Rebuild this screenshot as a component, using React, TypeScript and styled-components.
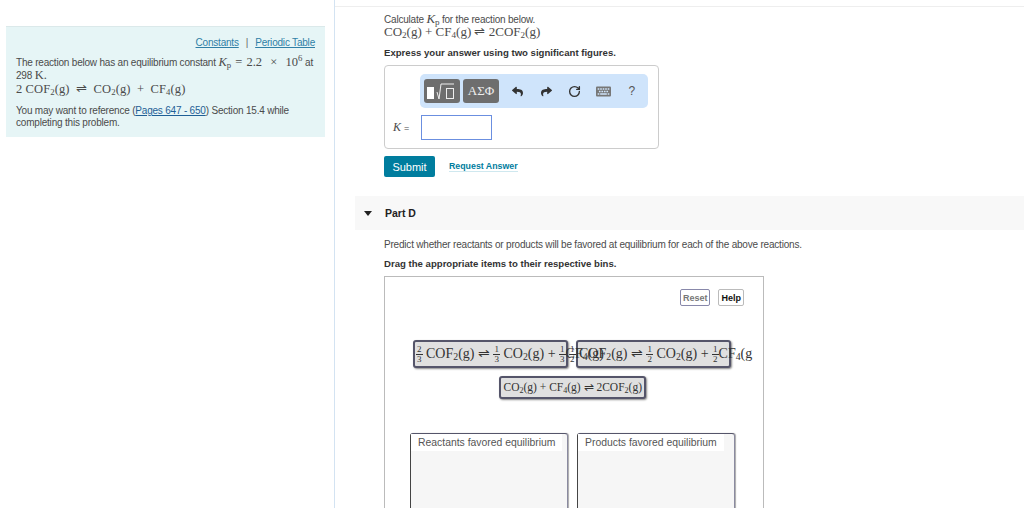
import styled, { createGlobalStyle } from "styled-components";
import { FaReply, FaShare, FaKeyboard } from "react-icons/fa";
import { RotateCw } from "lucide-react";

const GlobalStyle = createGlobalStyle`
	html, body {
		margin: 0;
		height: 508px;
		overflow: hidden;
		background: #fff;
		font-family: "Liberation Sans", Arial, sans-serif;
		color: #4b4b4b;
	}
`;

const Fraction = ({ top, bottom }: { top: string; bottom: string }) => (
	<Frac>
		<span>{top}</span>
		<span>{bottom}</span>
	</Frac>
);

const App = () => {
	return (
		<Page>
			<GlobalStyle />
			<LeftColumn>
				<InfoPanel>
					<InfoLinks>
						<InfoLink>Constants</InfoLink>
						<Pipe>|</Pipe>
						<InfoLink>Periodic Table</InfoLink>
					</InfoLinks>
					<InfoText>
						The reaction below has an equilibrium constant{" "}
						<InfoMath>
							<i>K</i>
							<sub>p</sub> = 2.2 &nbsp;×&nbsp; 10<sup>6</sup>
						</InfoMath>{" "}
						at
						<br />
						298 <InfoMath>K.</InfoMath>
					</InfoText>
					<InfoEquation>
						2 COF<sub>2</sub>(g) &nbsp;⇌&nbsp; CO<sub>2</sub>(g) &nbsp;+&nbsp; CF<sub>4</sub>(g)
					</InfoEquation>
					<InfoNote>
						You may want to reference (<NoteLink>Pages 647 - 650</NoteLink>) Section 15.4 while
						completing this problem.
					</InfoNote>
				</InfoPanel>
			</LeftColumn>
			<RightColumn>
				<Section>
					<Prompt>
						Calculate{" "}
						<PromptMath>
							<i>K</i>
							<sub>p</sub>
						</PromptMath>{" "}
						for the reaction below.
					</Prompt>
					<Equation>
						CO<sub>2</sub>(g) + CF<sub>4</sub>(g) ⇌ 2COF<sub>2</sub>(g)
					</Equation>
					<Instruction>Express your answer using two significant figures.</Instruction>
					<AnswerBox>
						<Toolbar>
							<ToolGroup>
								<ToolButton>
									<svg width="32" height="18" viewBox="0 0 32 18">
										<rect x="1" y="5" width="7" height="12" fill="#fff" />
										<path d="M11 10l2 7 2-15h13" fill="none" stroke="#eee" strokeWidth="1" />
										<rect x="20.5" y="6.5" width="7" height="10" fill="none" stroke="#eee" />
									</svg>
								</ToolButton>
								<ToolButton>ΑΣΦ</ToolButton>
							</ToolGroup>
							<ToolIcons>
								<IconSlot>
									<FaReply size={11} color="#333" />
								</IconSlot>
								<IconSlot>
									<FaShare size={11} color="#333" />
								</IconSlot>
								<IconSlot>
									<RotateCw size={13} color="#333" strokeWidth={2.5} />
								</IconSlot>
								<IconSlot>
									<FaKeyboard size={15} color="#777" />
								</IconSlot>
								<IconSlot>
									<HelpMark>?</HelpMark>
								</IconSlot>
							</ToolIcons>
						</Toolbar>
						<AnswerRow>
							<AnswerLabel>
								<i>K</i> <small>=</small>
							</AnswerLabel>
							<AnswerInput />
						</AnswerRow>
					</AnswerBox>
					<Actions>
						<SubmitButton>Submit</SubmitButton>
						<RequestLink>Request Answer</RequestLink>
					</Actions>
				</Section>
				<PartHeader>
					<Caret />
					<PartTitle>Part D</PartTitle>
				</PartHeader>
				<Section>
					<PredictText>
						Predict whether reactants or products will be favored at equilibrium for each of the
						above reactions.
					</PredictText>
					<DragInstruction>Drag the appropriate items to their respective bins.</DragInstruction>
					<DragArea>
						<DragTools>
							<SmallButton $muted>Reset</SmallButton>
							<SmallButton>Help</SmallButton>
						</DragTools>
						<TileRow>
							<Tile $indent={0}>
								<Fraction top="2" bottom="3" /> COF<sub>2</sub>(g) ⇌ <Fraction top="1" bottom="3" /> CO
								<sub>2</sub>(g) + <Fraction top="1" bottom="3" />
								CF<sub>4</sub>(g)
							</Tile>
							<Tile $indent={-10}>
								<Fraction top="1" bottom="2" /> COF<sub>2</sub>(g) ⇌ <Fraction top="1" bottom="2" /> CO
								<sub>2</sub>(g) + <Fraction top="1" bottom="2" />
								CF<sub>4</sub>(g
							</Tile>
						</TileRow>
						<TileRow>
							<SmallTile $indent={0}>
								CO<sub>2</sub>(g) + CF<sub>4</sub>(g) ⇌ 2COF<sub>2</sub>(g)
							</SmallTile>
						</TileRow>
						<Bins>
							<Bin>
								<BinLabel>Reactants favored equilibrium</BinLabel>
							</Bin>
							<Bin>
								<BinLabel>Products favored equilibrium</BinLabel>
							</Bin>
						</Bins>
					</DragArea>
				</Section>
			</RightColumn>
		</Page>
	);
};
export default App;

// =============================================================================
// Styled Components
// =============================================================================
const Page = styled.div`
	display: flex;
	height: 508px;
	overflow: hidden;
	sub,
	sup {
		font-size: 70%;
		line-height: 0;
	}
	sub {
		vertical-align: -0.2em;
	}
`;

const LeftColumn = styled.div`
	width: 335px;
	flex: none;
	box-sizing: border-box;
	border-right: 1px solid #d3e3f2;
	padding: 26px 9px 0 6px;
`;

const InfoPanel = styled.div`
	height: 111px;
	box-sizing: border-box;
	background: #e6f5f6;
	border-top: 1px solid #dbe9ea;
	padding: 10px 10px 0;
	font-size: 10px;
	letter-spacing: -0.2px;
	line-height: 12px;
`;

const InfoLinks = styled.div`
	display: flex;
	justify-content: flex-end;
	gap: 7px;
	margin-bottom: 7px;
`;

const InfoLink = styled.span`
	color: #2f7fa6;
	text-decoration: underline;
`;

const Pipe = styled.span`
	color: #666;
`;

const InfoText = styled.div`
	white-space: nowrap;
	line-height: 13px;
`;

const InfoMath = styled.span`
	font-family: "Liberation Serif", serif;
	font-size: 12.5px;
	line-height: 0;
	letter-spacing: 0;
	word-spacing: 1px;
`;

const InfoEquation = styled.div`
	font-family: "Liberation Serif", serif;
	font-size: 12.5px;
	line-height: 13px;
	letter-spacing: 0.1px;
	margin: 1px 0 9px;
`;

const InfoNote = styled.div``;

const NoteLink = styled.span`
	color: #1f5f96;
	text-decoration: underline;
`;

const RightColumn = styled.div`
	flex: 1;
	border-top: 1px solid #eee;
	margin-top: 6px;
`;

const Section = styled.div`
	padding-left: 49px;
`;

const Prompt = styled.div`
	font-size: 10px;
	letter-spacing: -0.2px;
	line-height: 12px;
	padding-top: 7px;
`;

const PromptMath = styled.span`
	font-family: "Liberation Serif", serif;
	font-size: 13px;
	line-height: 0;
`;

const Equation = styled.div`
	font-family: "Liberation Serif", serif;
	font-size: 13px;
	line-height: 14px;
	margin-top: -1px;
`;

const Instruction = styled.div`
	font-size: 9.6px;
	font-weight: bold;
	color: #333;
	line-height: 12px;
	margin-top: 8px;
`;

const AnswerBox = styled.div`
	width: 275px;
	height: 84px;
	box-sizing: border-box;
	border: 1px solid #ccc;
	border-radius: 4px;
	margin-top: 6px;
	padding: 8px 10px 0 8px;
`;

const Toolbar = styled.div`
	display: flex;
	align-items: center;
	justify-content: space-between;
	width: 228px;
	height: 34px;
	margin-left: 27px;
	box-sizing: border-box;
	padding: 0 2px 0 4px;
	background: #cfe4fb;
	border-radius: 5px;
`;

const ToolGroup = styled.div`
	display: flex;
	gap: 3px;
`;

const ToolButton = styled.div`
	width: 36px;
	height: 24px;
	display: flex;
	align-items: center;
	justify-content: center;
	background: #6e6e6e;
	border-radius: 3px;
	color: #eee;
	font-family: "Liberation Serif", serif;
	font-size: 13px;
`;

const ToolIcons = styled.div`
	display: flex;
	align-items: center;
`;

const IconSlot = styled.div`
	width: 28.5px;
	display: flex;
	align-items: center;
	justify-content: center;
`;

const HelpMark = styled.span`
	font-size: 12px;
	color: #555;
`;

const AnswerRow = styled.div`
	display: flex;
	align-items: center;
	margin-top: 7px;
`;

const AnswerLabel = styled.div`
	width: 28px;
	font-family: "Liberation Serif", serif;
	font-size: 12px;
	small {
		font-family: "Liberation Sans", sans-serif;
		font-size: 9px;
	}
`;

const AnswerInput = styled.div`
	width: 71px;
	height: 25px;
	box-sizing: border-box;
	border: 1px solid #6b8fe0;
`;

const Actions = styled.div`
	display: flex;
	align-items: center;
	gap: 14px;
	margin-top: 7px;
`;

const SubmitButton = styled.div`
	width: 51px;
	height: 21px;
	display: flex;
	align-items: center;
	justify-content: center;
	background: #007d9e;
	border-radius: 2px;
	color: #fff;
	font-size: 11px;
`;

const RequestLink = styled.span`
	color: #007d9e;
	font-size: 8.8px;
	font-weight: bold;
	border-bottom: 1px solid #cfe8ef;
`;

const PartHeader = styled.div`
	display: flex;
	align-items: center;
	height: 34px;
	margin: 19px 0 0 20px;
	background: #f8f8f8;
	padding-left: 9px;
`;

const Caret = styled.div`
	width: 0;
	height: 0;
	border-left: 4px solid transparent;
	border-right: 4px solid transparent;
	border-top: 5px solid #222;
`;

const PartTitle = styled.div`
	margin-left: 13px;
	font-size: 10.5px;
	font-weight: bold;
	color: #222;
`;

const PredictText = styled.div`
	font-size: 10px;
	letter-spacing: -0.2px;
	line-height: 12px;
	margin-top: 9px;
`;

const DragInstruction = styled.div`
	font-size: 9.6px;
	font-weight: bold;
	color: #333;
	line-height: 12px;
	margin-top: 7px;
`;

const DragArea = styled.div`
	width: 380px;
	height: 300px;
	box-sizing: border-box;
	border: 1px solid #bbb;
	margin-top: 6px;
	padding-top: 12px;
`;

const DragTools = styled.div`
	display: flex;
	justify-content: flex-end;
	gap: 8px;
	padding-right: 19px;
	margin-bottom: 34px;
`;

const SmallButton = styled.div<{ $muted?: boolean }>`
	height: 15px;
	padding: 0 2px;
	display: flex;
	align-items: center;
	border: 1px solid ${(p) => (p.$muted ? "#88a" : "#bbb")};
	border-radius: 2px;
	font-size: 9px;
	font-weight: bold;
	color: ${(p) => (p.$muted ? "#777" : "#111")};
`;

const TileRow = styled.div`
	display: flex;
	justify-content: center;
	gap: 8px;
	padding-right: 4px;
	margin-bottom: 8px;
`;

const Tile = styled.div<{ $indent: number }>`
	width: 155px;
	height: 28px;
	flex: none;
	box-sizing: border-box;
	white-space: nowrap;
	padding-left: 1px;
	text-indent: ${(p) => p.$indent}px;
	line-height: 24px;
	background: #e0e0e0;
	border: 2px solid #55556a;
	border-radius: 3px;
	box-shadow: 1px 1px 2px #888;
	font-family: "Liberation Serif", serif;
	font-size: 14px;
	color: #333;
	&:first-child {
		position: relative;
		z-index: 1;
	}
`;

const SmallTile = styled(Tile)`
	width: 147px;
	height: 23px;
	font-size: 11.5px;
	line-height: 19px;
	padding-left: 3px;
`;

const Frac = styled.span`
	display: inline-flex;
	flex-direction: column;
	align-items: center;
	vertical-align: middle;
	font-size: 9px;
	line-height: 9px;
	text-indent: 0;
	span:first-child {
		border-bottom: 1px solid #333;
		padding: 0 1px;
	}
`;

const Bins = styled.div`
	display: flex;
	gap: 9px;
	padding-left: 25px;
	margin-top: 34px;
`;

const Bin = styled.div`
	width: 158px;
	height: 120px;
	box-sizing: border-box;
	background: #f6f6f6;
	border: 1px solid #8a8aa0;
	border-top-color: #55556a;
	border-left-color: #444;
	border-radius: 3px;
	box-shadow: 1px 0 1px #aaa;
`;

const BinLabel = styled.div`
	background: #fff;
	padding: 2px 7px 0;
	height: 17px;
	box-sizing: border-box;
	width: fit-content;
	font-size: 10.4px;
	line-height: 13px;
	color: #555;
	white-space: nowrap;
`;
